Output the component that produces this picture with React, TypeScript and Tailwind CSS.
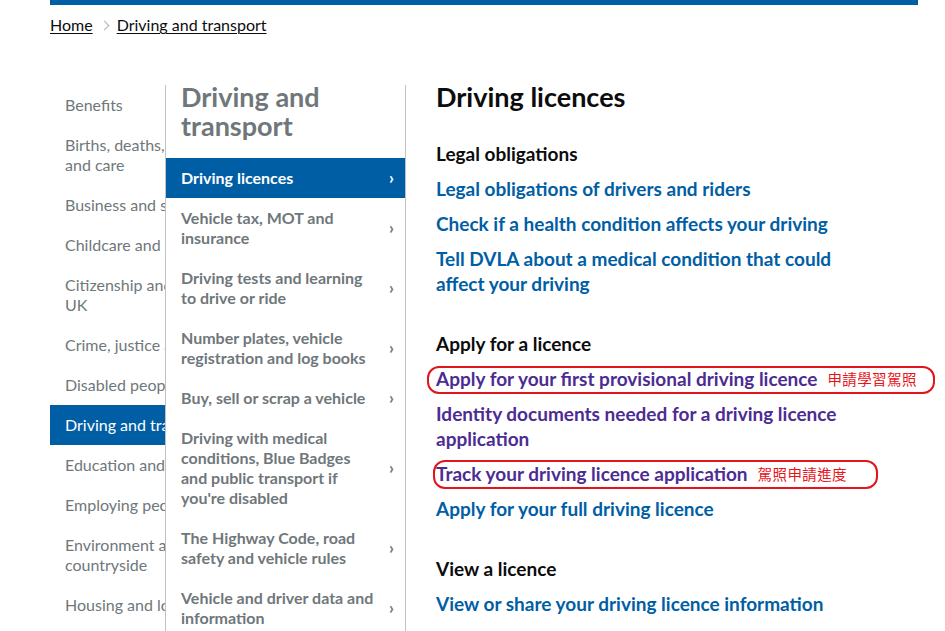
const topics = [
  "Benefits",
  "Births, deaths, marriages and care",
  "Business and self-employed",
  "Childcare and parenting",
  "Citizenship and living in the UK",
  "Crime, justice and the law",
  "Disabled people",
  "Driving and transport",
  "Education and learning",
  "Employing people",
  "Environment and countryside",
  "Housing and local services",
  "Money and tax",
];

const subtopics = [
  "Driving licences",
  "Vehicle tax, MOT and insurance",
  "Driving tests and learning to drive or ride",
  "Number plates, vehicle registration and log books",
  "Buy, sell or scrap a vehicle",
  "Driving with medical conditions, Blue Badges and public transport if you're disabled",
  "The Highway Code, road safety and vehicle rules",
  "Vehicle and driver data and information",
];

type LinkItem = {
  text: string;
  visited?: boolean;
  note?: { zh: string; box: string };
};

const sections: { title: string; links: LinkItem[] }[] = [
  {
    title: "Legal obligations",
    links: [
      { text: "Legal obligations of drivers and riders" },
      { text: "Check if a health condition affects your driving" },
      { text: "Tell DVLA about a medical condition that could affect your driving" },
    ],
  },
  {
    title: "Apply for a licence",
    links: [
      {
        text: "Apply for your first provisional driving licence",
        visited: true,
        note: { zh: "申請學習駕照", box: "-left-[9px] -right-[18px] -top-[0.5px] -bottom-[3px]" },
      },
      { text: "Identity documents needed for a driving licence application", visited: true },
      {
        text: "Track your driving licence application",
        visited: true,
        note: { zh: "駕照申請進度", box: "-left-[3px] -right-[31px] -top-[1.5px] -bottom-[3px]" },
      },
      { text: "Apply for your full driving licence" },
    ],
  },
  {
    title: "View a licence",
    links: [{ text: "View or share your driving licence information" }],
  },
];

function TopicNav() {
  return (
    <nav className="w-[115px] shrink-0 overflow-hidden">
      <ul className="w-[230px]">
        {topics.map((t) => {
          const active = t === "Driving and transport";
          return (
            <li
              key={t}
              className={`pl-[15px] pr-[15px] py-[10px] text-[16px] leading-[20px] ${
                active ? "bg-[#005ea5] text-white" : "text-[#6f777b]"
              }`}
            >
              {t}
            </li>
          );
        })}
      </ul>
    </nav>
  );
}

function SubtopicNav() {
  return (
    <nav className="w-[241px] shrink-0 border-x border-[#bfc1c3] min-h-[560px]">
      <h2 className="pl-[15px] pr-[10px] -mt-[3px] mb-[18px] text-[27px] leading-[29px] font-bold text-[#6f777b]">
        Driving and transport
      </h2>
      <ul>
        {subtopics.map((s, i) => {
          const active = i === 0;
          return (
            <li
              key={s}
              className={`flex items-center pl-[15px] pr-[11px] py-[10px] text-[16px] leading-[20px] font-bold ${
                active ? "bg-[#005ea5] text-white" : "text-[#6f777b]"
              }`}
            >
              <span className="w-[196px]">{s}</span>
              <span className="flex-1 text-right text-[17px] leading-[20px]">›</span>
            </li>
          );
        })}
      </ul>
    </nav>
  );
}

function LinkRow({ item }: { item: LinkItem }) {
  const color = item.visited ? "text-[#4c2c92]" : "text-[#005ea5]";
  if (!item.note) {
    return (
      <li className={`mt-[10px] text-[19px] leading-[25px] font-bold ${color}`}>
        <a href="#">{item.text}</a>
      </li>
    );
  }
  return (
    <li className="mt-[10px] text-[19px] leading-[25px]">
      <span className="relative inline-flex items-center whitespace-nowrap">
        <a href="#" className={`font-bold ${color}`}>
          {item.text}
        </a>
        <span className="ml-[10px] text-[14.5px] tracking-[0.4px] text-[#e8141b] font-['Noto_Sans_CJK_TC',sans-serif]">
          {item.note.zh}
        </span>
        <span
          className={`pointer-events-none absolute ${item.note.box} rounded-[12px] border-2 border-[#e3151c]`}
        />
      </span>
    </li>
  );
}

export default function App() {
  return (
    <div className="min-h-[631px] bg-white font-['Lato','Noto_Sans_CJK_TC',sans-serif] text-[#0b0c0c] overflow-hidden">
      <div className="ml-[50px] w-[868px]">
        <div className="h-[5px] bg-[#005ea5]" />

        <div className="mt-[10px] mb-[50px] flex items-center text-[16px] leading-[20px]">
          <a href="#" className="underline underline-offset-2 decoration-1">
            Home
          </a>
          <span className="ml-[8px] mr-[9px] inline-block h-[7px] w-[7px] rotate-45 border-t border-r border-[#b1b4b6]" />
          <a href="#" className="underline underline-offset-2 decoration-1">
            Driving and transport
          </a>
        </div>

        <div className="flex">
          <TopicNav />
          <SubtopicNav />

          <main className="pl-[30px] w-[460px]">
            <h1 className="-mt-[3px] mb-[30px] text-[27px] leading-[29px] font-bold">Driving licences</h1>
            {sections.map((sec) => (
              <section key={sec.title} className="mb-[35px] w-[425px]">
                <h2 className="text-[19px] leading-[25px] font-bold">{sec.title}</h2>
                <ul>
                  {sec.links.map((l) => (
                    <LinkRow key={l.text} item={l} />
                  ))}
                </ul>
              </section>
            ))}
          </main>
        </div>
      </div>
    </div>
  );
}
